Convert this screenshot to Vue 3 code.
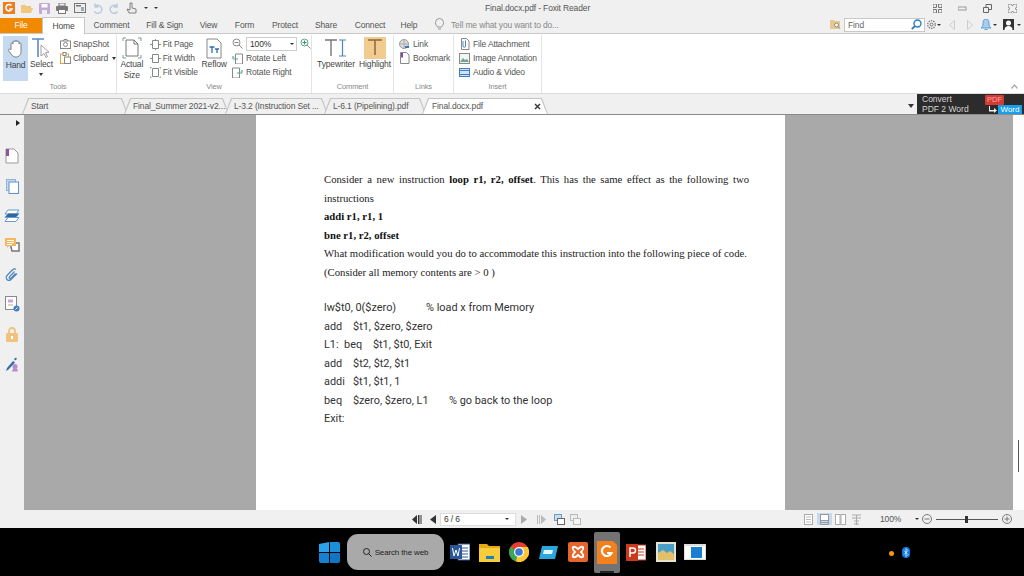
<script setup>
const menuTabs = [
  { label: 'Comment', w: 53 },
  { label: 'Fill & Sign', w: 53 },
  { label: 'View', w: 35 },
  { label: 'Form', w: 37 },
  { label: 'Protect', w: 44 },
  { label: 'Share', w: 38 },
  { label: 'Connect', w: 50 },
  { label: 'Help', w: 28 }
]
const docTabs = [
  { label: 'Final_Summer 2021-v2...', w: 105 },
  { label: 'L-3.2  (Instruction Set ...', w: 103 },
  { label: 'L-6.1 (Pipelining).pdf', w: 102 }
]
const codeLines = [
  'add    $t1, $zero, $zero',
  'L1:  beq    $t1, $t0, Exit',
  'add    $t2, $t2, $t1',
  'addi   $t1, $t1, 1'
]
const beqLine = 'beq    $zero, $zero, L1'
</script>

<template>
  <div class="app">
    <!-- title bar -->
    <div class="titlebar">
      <div class="quick">
        <svg width="12" height="12" viewBox="0 0 12 12"><rect width="12" height="12" fill="#ee7d1f"/><path d="M8.500 3.500A3.200 3.200 0 1 0 9 7H6.200" fill="none" stroke="#fff" stroke-width="1.600"/></svg>
        <svg width="12" height="11" viewBox="0 0 12 11"><path d="M0 2h4l1 1h5v2H3L1 10H0zM3 5h9l-2 5H1z" fill="#f0c77e"/></svg>
        <svg width="11" height="11" viewBox="0 0 11 11"><rect width="11" height="11" rx="1" fill="#c4a9d6"/><rect x="2.500" y="1" width="6" height="3.500" fill="#fff"/><rect x="3" y="7" width="5" height="4" fill="#eee"/></svg>
        <svg width="12" height="11" viewBox="0 0 12 11"><rect x="3" width="6" height="3" fill="none" stroke="#777"/><rect y="3" width="12" height="5" rx="1" fill="#777"/><rect x="2.500" y="6.500" width="7" height="4" fill="#fff" stroke="#777"/></svg>
        <svg width="12" height="10" viewBox="0 0 12 10"><rect x=".5" y=".5" width="11" height="9" fill="#eee" stroke="#777"/><rect x="2" y="2" width="5" height="1.500" fill="#777"/><rect x="7" y="4" width="3" height="4" fill="#9ab"/></svg>
        <svg width="11" height="11" viewBox="0 0 11 11"><path d="M3 3.500a4 4 0 1 1-.5 5M3 .5v3.500h3.500" fill="none" stroke="#b9cbe0" stroke-width="1.500"/></svg>
        <svg width="11" height="11" viewBox="0 0 11 11"><path d="M8 3.500a4 4 0 1 0 .5 5M8 .5v3.500H4.500" fill="none" stroke="#b9cbe0" stroke-width="1.500"/></svg>
        <svg width="12" height="13" viewBox="0 0 12 13"><path d="M4 1h2v5l4 1v4H3L1 7l3 1z" fill="#eee" stroke="#666" stroke-width=".8"/></svg>
        <span class="caret small"></span>
        <span class="caret small"></span>
      </div>
      <div class="title">Final.docx.pdf - Foxit Reader</div>
      <div class="winctl">
        <svg width="9" height="9" viewBox="0 0 9 9"><path d="M0 0h3.500v3.500H0zM5.500 0H9v3.500H5.500zM0 5.500h3.500V9H0zM5.500 5.500H9V9H5.500z" fill="none" stroke="#777"/></svg>
        <svg width="9" height="9" viewBox="0 0 9 9"><rect y="3" width="8" height="3" fill="none" stroke="#999"/></svg>
        <svg width="9" height="9" viewBox="0 0 9 9"><path d="M.5 3.500h5v5h-5zM3 3V.5h5.500v5H6" fill="none" stroke="#666"/></svg>
        <svg width="9" height="9" viewBox="0 0 9 9"><path d="M0 0h3l1.500 2L6 0h3v3L7 4.500 9 6v3H6L4.500 7 3 9H0V6l2-1.500L0 3z" fill="none" stroke="#777" stroke-width=".8"/></svg>
      </div>
    </div>

    <!-- menu row -->
    <div class="menurow">
      <div class="file">File</div>
      <div class="home">Home</div>
      <div v-for="t in menuTabs" :key="t.label" class="menutab" :style="{ width: t.w + 'px' }">{{ t.label }}</div>
      <svg class="bulb" width="9" height="13" viewBox="0 0 9 13"><path d="M2.500 9C1.500 7.500.5 7 .5 4.500a4 4 0 0 1 8 0C8.500 7 7.500 7.500 6.500 9zM3 11h3" fill="none" stroke="#999"/></svg>
      <div class="tellme">Tell me what you want to do...</div>
      <div class="grow"></div>
      <svg class="findfolder" width="11" height="11" viewBox="0 0 11 11"><path d="M0 1h4l1 1h5v8H0z" fill="#e8c88e"/><circle cx="6.500" cy="6" r="2" fill="#fff" stroke="#888"/><path d="M8 7.500l2 2" stroke="#888"/></svg>
      <div class="find">
        <span>Find</span>
        <svg width="11" height="11" viewBox="0 0 11 11"><circle cx="6.500" cy="4.500" r="3.500" fill="none" stroke="#2e7dc2" stroke-width="1.400"/><path d="M4 7L.8 10.200" stroke="#2e7dc2" stroke-width="1.800"/></svg>
      </div>
      <svg class="gear" width="11" height="11" viewBox="0 0 11 11"><circle cx="5.500" cy="5.500" r="3.800" fill="none" stroke="#777" stroke-width="1.200" stroke-dasharray="1.500 .9"/><circle cx="5.500" cy="5.500" r="1.500" fill="none" stroke="#777"/></svg>
      <span class="caret small"></span>
      <svg class="navarrow" width="6" height="10" viewBox="0 0 6 10"><path d="M5.500.5L.5 5l5 4.500z" fill="none" stroke="#ccc"/></svg>
      <svg class="navarrow2" width="6" height="10" viewBox="0 0 6 10"><path d="M.5.500L5.500 5 .5 9.500z" fill="none" stroke="#ccc"/></svg>
      <svg class="bell" width="10" height="12" viewBox="0 0 10 12"><path d="M5 0c3 0 3 3 3 5s1 3 2 4H0c1-1 2-2 2-4s0-5 3-5zM3.500 10.500h3" fill="#a9cdee" stroke="#3f8ed0" stroke-width=".8"/></svg>
      <span class="caret small"></span>
      <svg class="user" width="11" height="11" viewBox="0 0 11 11"><rect width="11" height="11" fill="#333"/><circle cx="5.500" cy="4" r="2.500" fill="#fff"/><path d="M1.500 11c0-3 2-4 4-4s4 1 4 4z" fill="#fff"/></svg>
      <span class="caret small"></span>
    </div>

    <!-- ribbon -->
    <div class="ribbon">
      <div class="group g-tools">
        <div class="groupbody">
          <div class="bigbtn hand">
            <svg width="18" height="20" viewBox="0 0 18 20"><path d="M4 11V5a1 1 0 0 1 2 0V3a1 1 0 0 1 2 0v-.5a1 1 0 0 1 2 0V3a1 1 0 0 1 2 0v2a1 1 0 0 1 2 0v7c0 4-2 6-5 6-2.500 0-3.500-1-5-3l-2.500-3.500c-.5-1 .8-2 2-1z" fill="#fff" stroke="#777" stroke-width=".9"/></svg>
            <span class="handlabel">Hand</span>
          </div>
          <div class="bigbtn select">
            <svg width="20" height="22" viewBox="0 0 20 22"><path d="M1 2h12M7 2v18" stroke="#5b8cc0" stroke-width="1.600" fill="none"/><path d="M10 8v11l3-2.500 2 4 1.500-.8-2-4 3.500-.5z" fill="#fff" stroke="#888" stroke-width=".8"/></svg>
            <span class="biglabel">Select</span>
            <span class="caret"></span>
          </div>
          <div class="rows r-snap">
            <div class="row">
              <svg width="11" height="10" viewBox="0 0 11 10"><rect x=".5" y="2" width="10" height="7.500" fill="none" stroke="#888"/><circle cx="5.500" cy="5.500" r="2" fill="none" stroke="#888"/><path d="M3 2l1-1.500h3L8 2" fill="none" stroke="#888"/></svg>
              <span>SnapShot</span>
            </div>
            <div class="row">
              <svg width="11" height="12" viewBox="0 0 11 12"><rect x=".5" y="2" width="8" height="9.500" fill="#fff" stroke="#e8a33d"/><rect x="3" y=".5" width="3" height="3" fill="#fff" stroke="#888"/><rect x="4.500" y="5" width="6" height="6.500" fill="#fff" stroke="#888"/></svg>
              <span>Clipboard</span>
              <span class="caret ml"></span>
            </div>
          </div>
        </div>
        <div class="grouplabel">Tools</div>
      </div>

      <div class="group g-view">
        <div class="groupbody">
          <div class="bigbtn actual">
            <svg width="20" height="22" viewBox="0 0 20 22"><path d="M4 3h8l4 4v12H4z" fill="#fff" stroke="#777"/><path d="M12 3v4h4" fill="none" stroke="#777"/><path d="M1 4V1h3M16 1h3v3M1 18v3h3M16 21h3v-3" fill="none" stroke="#6aa88f"/></svg>
            <span class="biglabel">Actual<br>Size</span>
          </div>
          <div class="rows r-fit">
            <div class="row">
              <svg width="11" height="11" viewBox="0 0 11 11"><path d="M2.500 1.500h6v8h-6z" fill="#fff" stroke="#888"/><path d="M5.500 0v2M5.500 9v2M0 5.500h2M9 5.500h2" stroke="#5ba58a"/></svg>
              <span>Fit Page</span>
            </div>
            <div class="row">
              <svg width="11" height="11" viewBox="0 0 11 11"><path d="M2.500 1.500h6v8h-6z" fill="#fff" stroke="#888"/><path d="M0 5.500h2M9 5.500h2" stroke="#5ba58a"/></svg>
              <span>Fit Width</span>
            </div>
            <div class="row">
              <svg width="11" height="11" viewBox="0 0 11 11"><path d="M2.500 1.500h6v8h-6z" fill="#fff" stroke="#888"/><path d="M0 2V0h2M9 0h2v2M0 9v2h2M9 11h2V9" fill="none" stroke="#5ba58a"/></svg>
              <span>Fit Visible</span>
            </div>
          </div>
          <div class="bigbtn reflow">
            <svg width="16" height="21" viewBox="0 0 16 21"><path d="M1 1h10l4 4v15H1z" fill="#fff" stroke="#888"/><path d="M3.500 9h5M6 9v6M9 11h4M11 11v4" stroke="#2f6fa8" stroke-width="1.300" fill="none"/></svg>
            <span class="biglabel">Reflow</span>
          </div>
          <div class="rows r-zoom">
            <div class="zoomrow">
              <svg width="11" height="11" viewBox="0 0 11 11"><circle cx="4.500" cy="4.500" r="3.500" fill="none" stroke="#888"/><path d="M2.500 4.500h4M7 7l3.500 3.500" stroke="#888"/></svg>
              <div class="zoombox"><span>100%</span><span class="caret small"></span></div>
              <svg width="11" height="11" viewBox="0 0 11 11"><circle cx="4.500" cy="4.500" r="3.500" fill="none" stroke="#5ba58a"/><path d="M2.500 4.500h4M4.500 2.500v4" stroke="#3b9273"/><path d="M7 7l3.500 3.500" stroke="#888"/></svg>
            </div>
            <div class="row">
              <svg width="11" height="11" viewBox="0 0 11 11"><path d="M3.500 1h7v10h-7z" fill="#fff" stroke="#888"/><path d="M6 6H1M1 6V3.500M1 3.500l-1 1M1 3.500l1 1" stroke="#5ba58a" fill="none"/></svg>
              <span>Rotate Left</span>
            </div>
            <div class="row">
              <svg width="11" height="11" viewBox="0 0 11 11"><path d="M.5 1h7v10h-7z" fill="#fff" stroke="#888"/><path d="M5 6h5M10 6V3.500M10 3.500l-1 1M10 3.500l1 1" stroke="#5ba58a" fill="none"/></svg>
              <span>Rotate Right</span>
            </div>
          </div>
        </div>
        <div class="grouplabel">View</div>
      </div>

      <div class="group g-comment">
        <div class="groupbody">
          <div class="bigbtn typewriter">
            <svg width="24" height="22" viewBox="0 0 24 22"><path d="M1 3h12M7 3v16" stroke="#777" stroke-width="1.400" fill="none"/><path d="M15 3h7M15 19h7M18.500 3v16" stroke="#4d86bf" stroke-width="1.200" fill="none"/></svg>
            <span class="biglabel">Typewriter</span>
          </div>
          <div class="bigbtn highlight">
            <div class="hl-icon">
              <svg width="22" height="21" viewBox="0 0 22 21"><path d="M4 3h14M11 3v15" stroke="#8a6a3a" stroke-width="1.500" fill="none"/></svg>
            </div>
            <span class="biglabel">Highlight</span>
          </div>
        </div>
        <div class="grouplabel">Comment</div>
      </div>

      <div class="group g-links">
        <div class="groupbody">
          <div class="rows r-links">
            <div class="row">
              <svg width="11" height="11" viewBox="0 0 11 11"><circle cx="5" cy="5" r="4.500" fill="#ddd" stroke="#999"/><path d="M.5 5h9M5 .5v9" stroke="#aaa"/><path d="M6 8h2M8 8h2" stroke="#3677b5" stroke-width="2"/></svg>
              <span>Link</span>
            </div>
            <div class="row">
              <svg width="11" height="12" viewBox="0 0 11 12"><path d="M1.500.5h6l2.500 2.500v8.500h-8.500z" fill="#fff" stroke="#888"/><path d="M2 1h2v5L3 5 2 6z" fill="#7a4ea0"/></svg>
              <span>Bookmark</span>
            </div>
          </div>
        </div>
        <div class="grouplabel">Links</div>
      </div>

      <div class="group g-insert">
        <div class="groupbody">
          <div class="rows r-insert">
            <div class="row">
              <svg width="11" height="12" viewBox="0 0 11 12"><path d="M2.500.5h5l2.500 2.500v8.500H2.500z" fill="#fff" stroke="#888"/><path d="M4 3v5a1.200 1.200 0 0 0 2.500 0V2.500" fill="none" stroke="#4d86bf"/></svg>
              <span>File Attachment</span>
            </div>
            <div class="row">
              <svg width="11" height="11" viewBox="0 0 11 11"><rect x=".5" y=".5" width="10" height="10" fill="#f5f5f5" stroke="#888"/><path d="M1 9l3-4 2 2 2-1 2 3z" fill="#6aa88f"/></svg>
              <span>Image Annotation</span>
            </div>
            <div class="row">
              <svg width="11" height="9" viewBox="0 0 11 9"><rect x=".5" y=".5" width="10" height="8" fill="#cfe2f3" stroke="#3f7fbd"/><path d="M.5 2.500h10M.5 6.500h10" stroke="#3f7fbd"/></svg>
              <span>Audio &amp; Video</span>
            </div>
          </div>
        </div>
        <div class="grouplabel">Insert</div>
      </div>

      <div class="grow ribbon-end">
        <svg width="7" height="5" viewBox="0 0 7 5"><path d="M.5 4.500L3.500 1l3 3.500" fill="none" stroke="#aaa" stroke-width="1.300"/></svg>
      </div>
    </div>

    <!-- document tabs -->
    <div class="tabstrip">
      <div class="doctab start">Start</div>
      <div v-for="t in docTabs" :key="t.label" class="doctab" :style="{ width: t.w + 'px' }">{{ t.label }}</div>
      <div class="doctab active">
        <span>Final.docx.pdf</span>
        <svg width="7" height="7" viewBox="0 0 7 7"><path d="M1 1l5 5M6 1L1 6" stroke="#333" stroke-width="1.400"/></svg>
      </div>
      <div class="grow"></div>
      <span class="caret stripcaret"></span>
      <div class="convert">
        <div class="convertrow"><span>Convert</span><span class="pdfpill">PDF</span></div>
        <div class="convertrow">
          <span>PDF 2 Word</span>
          <span class="wordwrap">
            <svg width="8" height="7" viewBox="0 0 8 7"><path d="M1 0v4h4V2l3 2.500L5 7V5.500H0V0z" fill="#eee"/></svg>
            <span class="wordpill">Word</span>
          </span>
        </div>
      </div>
    </div>

    <!-- main -->
    <div class="main">
      <div class="sidebar">
        <span class="sidearrow"></span>
        <svg width="14" height="16" viewBox="0 0 14 16"><path d="M1 1h8l4 4v10H1z" fill="#fff" stroke="#999"/><rect x="1" y="1" width="3" height="7" fill="#8a56a8"/></svg>
        <svg width="13" height="15" viewBox="0 0 13 15"><rect x=".5" y=".5" width="9" height="11" fill="#c6d9ec" stroke="#8fb2d6"/><rect x="3" y="3" width="9.500" height="11.500" fill="#fff" stroke="#5b93c9"/></svg>
        <svg width="16" height="14" viewBox="0 0 16 14"><path d="M4 1h11l-3 4H1z" fill="#fff" stroke="#6a9bd0"/><path d="M4 4.500h11l-3 4H1z" fill="#33659c" stroke="#6a9bd0"/><path d="M4 8.500h11l-3 4H1z" fill="#fff" stroke="#6a9bd0"/></svg>
        <svg width="15" height="14" viewBox="0 0 15 14"><path d="M5 5h9v8H7z" fill="#fff" stroke="#777" stroke-width="1.500"/><path d="M0 0h11v8H4L2 10V8H0z" fill="#f4b65f"/><path d="M2 2.500h7M2 4.500h7M2 6.500h5" stroke="#fff"/></svg>
        <svg width="14" height="14" viewBox="0 0 14 14"><path d="M11 2.500a2.200 2.200 0 0 0-3.200 0L2 8.500a2.800 2.800 0 0 0 4 4l6-6M9.500 4.500L4.500 9.800a1 1 0 0 0 1.500 1.400l4.500-4.700" fill="none" stroke="#4d86bf" stroke-width="1.200"/></svg>
        <svg width="15" height="16" viewBox="0 0 15 16"><rect x=".5" y=".5" width="11" height="13" fill="#fff" stroke="#888"/><path d="M3 3.500h5v3H3z" fill="#c7a6dc"/><path d="M3 9h5" stroke="#aaa"/><circle cx="11.500" cy="12.500" r="3" fill="#3f7fbd"/><path d="M10.500 13.500l2-2" stroke="#fff"/></svg>
        <svg width="12" height="15" viewBox="0 0 12 15"><path d="M3 6V4a3 3 0 0 1 6 0v2" fill="none" stroke="#efc27f" stroke-width="1.800"/><rect y="6" width="12" height="9" rx="1" fill="#efc27f"/><rect x="5" y="9" width="2" height="3" fill="#fff"/></svg>
        <svg width="14" height="15" viewBox="0 0 14 15"><path d="M1 14l1-3 6-7 2 1.500-6.500 7z" fill="#2f6fa8"/><path d="M9 2l2-1.500 1 1.500-2 1.500z" fill="#2f6fa8"/><circle cx="10" cy="9.500" r="2.500" fill="#b58ccf"/><path d="M8 11.500l-1 3h6l-1-3z" fill="#b58ccf"/></svg>
        <div class="grip"></div>
      </div>
      <div class="docarea">
        <div class="page">
          <p class="just">Consider a new instruction <b>loop r1, r2, offset</b>. This has the same effect as the following two</p>
          <p>instructions</p>
          <p><b>addi r1, r1, 1</b></p>
          <p><b>bne r1, r2, offset</b></p>
          <p>What modification would you do to accommodate this instruction into the following piece of code.</p>
          <p>(Consider all memory contents are &gt; 0 )</p>
          <div class="code">
            <p class="withnote"><span class="c1">lw$t0, 0($zero)</span><span>% load x from Memory</span></p>
            <p v-for="l in codeLines" :key="l">{{ l }}</p>
            <p class="withnote"><span class="c2">{{ beqLine }}</span><span>% go back to the loop</span></p>
            <p>Exit:</p>
          </div>
        </div>
      </div>
      <div class="scrollbar"><div class="thumb"></div></div>
    </div>

    <!-- status bar -->
    <div class="status">
      <div class="pagenav">
        <svg width="11" height="9" viewBox="0 0 11 9"><path d="M5 0v9L0 4.500zM6 0h1.500v9H6zM8.500 0h1v9h-1z" fill="#333"/></svg>
        <svg class="prev" width="6" height="9" viewBox="0 0 6 9"><path d="M6 0v9L0 4.500z" fill="#333"/></svg>
        <div class="pagebox"><span>6 / 6</span><span class="caret small"></span></div>
        <svg width="6" height="9" viewBox="0 0 6 9"><path d="M0 0v9l6-4.500z" fill="#aaa"/></svg>
        <svg class="last" width="9" height="9" viewBox="0 0 9 9"><path d="M0 0h1v9H0zM2 0h1v9H2zM4 0v9l5-4.500z" fill="#bbb"/></svg>
        <svg width="11" height="11" viewBox="0 0 11 11"><rect x=".5" y=".5" width="7" height="6" fill="#cde" stroke="#6a9bd0"/><rect x="3.500" y="4.500" width="7" height="6" fill="#fff" stroke="#666"/></svg>
        <svg class="lastcopy" width="11" height="11" viewBox="0 0 11 11"><rect x=".5" y=".5" width="7" height="6" fill="#eee" stroke="#bbb"/><rect x="3.500" y="4.500" width="7" height="6" fill="#f5f5f5" stroke="#bbb"/></svg>
      </div>
      <div class="viewbtns">
        <div class="vbtn"><svg width="9" height="11" viewBox="0 0 9 11"><rect x=".5" y=".5" width="8" height="10" fill="#fff" stroke="#aaa"/><path d="M2 3h5M2 5.500h5M2 8h5" stroke="#bbb"/></svg></div>
        <div class="vbtn on"><svg width="9" height="11" viewBox="0 0 9 11"><rect x=".5" y=".5" width="8" height="6" fill="#fff" stroke="#999"/><path d="M.5 8.500h8M.5 10.500h8M.5 6.500v4M8.500 6.500v4" stroke="#999"/></svg></div>
        <div class="vbtn"><svg width="11" height="11" viewBox="0 0 11 11"><rect x=".5" y=".5" width="4.500" height="10" fill="#fff" stroke="#aaa"/><rect x="6" y=".5" width="4.500" height="10" fill="#fff" stroke="#aaa"/></svg></div>
        <div class="vbtn"><svg width="11" height="11" viewBox="0 0 11 11"><path d="M1 1h9M1 4h9M5.500 1v10M3 7h5M3 10h5" stroke="#aaa" fill="none"/></svg></div>
      </div>
      <div class="zoomval">100%</div>
      <span class="caret small"></span>
      <svg width="10" height="10" viewBox="0 0 10 10"><circle cx="5" cy="5" r="4.500" fill="none" stroke="#777"/><path d="M2.500 5h5" stroke="#777"/></svg>
      <div class="slider"><div class="knob"></div></div>
      <svg width="10" height="10" viewBox="0 0 10 10"><circle cx="5" cy="5" r="4.500" fill="none" stroke="#777"/><path d="M2.500 5h5M5 2.500v5" stroke="#777"/></svg>
    </div>

    <!-- taskbar -->
    <div class="taskbar">
      <svg class="winlogo" width="21" height="21" viewBox="0 0 21 21"><path d="M0 2l10-2v10H0z" fill="#2aa4e8"/><path d="M11 0h8a2 2 0 0 1 2 2v8H11z" fill="#1a90dd"/><path d="M0 11h10v10H2a2 2 0 0 1-2-2z" fill="#1482d0"/><path d="M11 11h10v8a2 2 0 0 1-2 2h-8z" fill="#0f76c4"/></svg>
      <div class="search">
        <svg width="9" height="9" viewBox="0 0 9 9"><circle cx="3.500" cy="3.500" r="3" fill="none" stroke="#222"/><path d="M5.800 5.800L8.500 8.500" stroke="#222"/></svg>
        <span>Search the web</span>
      </div>
      <div class="apps">
        <div class="app-slot">
          <svg width="20" height="18" viewBox="0 0 20 18"><rect x="8" y="1" width="12" height="16" fill="#fff" stroke="#2b5797"/><path d="M11 5h7M11 8h7M11 11h7M11 14h7" stroke="#2b5797"/><rect y="2" width="12" height="14" fill="#2b5797"/><path d="M2.500 5l1.500 8 2-6 2 6 1.500-8" stroke="#fff" fill="none"/></svg>
        </div>
        <div class="app-slot">
          <svg width="21" height="19" viewBox="0 0 21 19"><path d="M0 1h8l2 2h11v3H0z" fill="#e8a919"/><rect y="5" width="21" height="14" fill="#f8cd3a"/><rect x="7" y="13" width="8" height="3" fill="#1b7fc4"/></svg>
        </div>
        <div class="app-slot">
          <svg width="20" height="20" viewBox="0 0 20 20"><circle cx="10" cy="10" r="10" fill="#e5402f"/><path d="M10 10L1.400 5A10 10 0 0 0 7 19.500z" fill="#3aa757"/><path d="M10 5h8.700A10 10 0 0 1 7 19.500z" fill="#fcc934"/><circle cx="10" cy="10" r="5" fill="#fff"/><circle cx="10" cy="10" r="3.800" fill="#3b78d8"/></svg>
        </div>
        <div class="app-slot">
          <svg width="19" height="13" viewBox="0 0 19 13"><path d="M3 0h16l-3 13H0z" fill="#2aa7de"/><path d="M5 4h9l-1 4H4z" fill="#e6f5fb"/></svg>
        </div>
        <div class="app-slot">
          <svg width="20" height="20" viewBox="0 0 20 20"><rect width="20" height="20" rx="2" fill="#e4662c"/><path d="M5 5c2-1 3 0 5 2 2-2 3-3 5-2 1 2 0 3-2 5 2 2 3 3 2 5-2 1-3 0-5-2-2 2-3 3-5 2-1-2 0-3 2-5-2-2-3-3-2-5z" fill="none" stroke="#fff" stroke-width="1.800"/></svg>
        </div>
        <div class="app-slot active-slot">
          <svg width="20" height="23" viewBox="0 0 20 23"><path d="M0 0h16l4 4v19H0z" fill="#f2811d"/><path d="M13.500 6.500A5 5 0 1 0 14.500 12H10" fill="none" stroke="#fff" stroke-width="2.200"/></svg>
          <div class="activebar"></div>
        </div>
        <div class="app-slot">
          <svg width="20" height="19" viewBox="0 0 20 19"><rect x="8" y="2" width="12" height="15" fill="#fff" stroke="#c43e1c"/><path d="M12 6h6M12 9h6M12 12h6" stroke="#c43e1c"/><rect y="1" width="12" height="17" fill="#c8391d"/><path d="M4 14V5h3a2 2 0 0 1 0 5H4" fill="none" stroke="#fff" stroke-width="1.500"/></svg>
        </div>
        <div class="app-slot">
          <svg width="20" height="20" viewBox="0 0 20 20"><rect width="20" height="20" fill="#e8e2cc"/><rect x="2" y="2" width="16" height="16" fill="#4a9fc9"/><path d="M2 11l5-3 4 3 3-2 4 3v6H2z" fill="#e2bf6a"/></svg>
        </div>
        <div class="app-slot">
          <svg width="22" height="16" viewBox="0 0 22 16"><rect width="22" height="16" fill="#ddd"/><rect x="1" y="2" width="20" height="13" fill="#fff"/><rect x="7" y="3" width="11" height="11" fill="#1a7fd0"/></svg>
        </div>
      </div>
      <div class="grow"></div>
      <div class="tray">
        <span class="dot"></span>
        <svg width="8" height="11" viewBox="0 0 8 11"><rect width="8" height="11" rx="4" fill="#0a78e0"/><path d="M2 3.500l4 4-2 2v-8l2 2-4 4" fill="none" stroke="#fff" stroke-width=".7"/></svg>
      </div>
    </div>
  </div>
</template>

<style scoped>
.app {
  width: 1024px;
  height: 576px;
  display: flex;
  flex-direction: column;
  overflow: hidden;
  background: #f0f0f0;
  font-family: "Liberation Sans", Arial, sans-serif;
  font-size: 8.5px;
  letter-spacing: -.14px;
  color: #555;
}
.grow { flex: 1; }
.caret {
  display: inline-block;
  width: 0;
  height: 0;
  border-left: 2.5px solid transparent;
  border-right: 2.5px solid transparent;
  border-top: 3px solid #333;
}
.caret.small { border-left-width: 2px; border-right-width: 2px; border-top-width: 2px; }
.caret.ml { margin-left: 2px; }

.titlebar {
  height: 16px;
  display: flex;
  align-items: center;
  padding: 0 7px 0 3px;
}
.quick { width: 482px; display: flex; align-items: center; gap: 6px; }
.title { color: #555; width: 100px; white-space: nowrap; }
.winctl {
  margin-left: auto;
  display: flex;
  align-items: center;
  gap: 16px;
}

.menurow {
  height: 17px;
  display: flex;
  align-items: center;
  border-bottom: 1px solid #c8c8c8;
  padding-right: 3px;
  box-sizing: content-box;
}
.file {
  width: 42px;
  height: 15px;
  line-height: 15px;
  background: #f18a00;
  color: #fff;
  text-align: center;
  align-self: flex-end;
}
.home {
  width: 43px;
  height: 17px;
  line-height: 17px;
  background: #fff;
  text-align: center;
  color: #444;
  border: 1px solid #c8c8c8;
  border-bottom: none;
  box-sizing: border-box;
  align-self: flex-end;
  margin-bottom: -1px;
}
.menutab { text-align: center; white-space: nowrap; }
.bulb { margin-left: 12px; }
.tellme { margin-left: 7px; color: #888; }
.findfolder { margin-right: 3px; }
.find {
  width: 81px;
  height: 14px;
  background: #fff;
  border: 1px solid #c8c8c8;
  box-sizing: border-box;
  display: flex;
  align-items: center;
  justify-content: space-between;
  padding: 0 2px 0 3px;
  color: #666;
}
.gear { margin-left: 1px; }
.navarrow { margin-left: 8px; }
.navarrow2 { margin: 0 8px 0 12px; }
.bell { margin-right: 2px; }
.user { margin: 0 3px 0 6px; }

.ribbon {
  height: 60px;
  display: flex;
  background: #fff;
  border-bottom: 1px solid #dcdcdc;
  box-sizing: border-box;
}
.group {
  display: flex;
  flex-direction: column;
  border-right: 1px solid #e4e4e4;
  box-sizing: border-box;
  height: 58px;
  margin-top: 1px;
}
.groupbody { flex: 1; display: flex; min-height: 0; }
.grouplabel {
  height: 12px;
  line-height: 11px;
  text-align: center;
  color: #888;
  font-size: 7.5px;
}
.g-tools { width: 117px; }
.g-view { width: 195px; }
.g-comment { width: 82px; }
.g-links { width: 60px; }
.g-insert { width: 88px; }
.ribbon-end {
  display: flex;
  align-items: flex-end;
  justify-content: flex-end;
  padding: 0 6px 4px 0;
}
.bigbtn {
  display: flex;
  flex-direction: column;
  align-items: center;
  line-height: 11px;
  color: #444;
}
.biglabel { text-align: center; white-space: nowrap; }
.hand {
  width: 27px;
  height: 45px;
  margin: 1px 0 0 3px;
  background: #c5d9f1;
  padding-top: 3px;
  box-sizing: border-box;
}
.handlabel { margin-top: 1px; }
.select { width: 24px; margin: 2px 0 0 2px; }
.select .caret { margin-top: 3px; }
.r-snap { margin-left: 7px; }
.rows { display: flex; flex-direction: column; padding-top: 2px; }
.row {
  height: 14px;
  display: flex;
  align-items: center;
  gap: 2px;
  white-space: nowrap;
  color: #555;
}
.row svg { flex: none; }
.actual { width: 30px; margin: 2px 0 0 1px; }
.r-fit { margin-left: 4px; width: 55px; }
.reflow { width: 30px; margin: 3px 0 0 0; }
.r-zoom { margin-left: 4px; padding-top: 1px; }
.zoomrow { height: 15px; display: flex; align-items: center; gap: 3px; }
.zoombox {
  width: 51px;
  height: 14px;
  background: #fff;
  border: 1px solid #ccc;
  box-sizing: border-box;
  display: flex;
  align-items: center;
  justify-content: space-between;
  padding: 0 2px 0 3px;
  color: #333;
}
.r-zoom .row { height: 14px; gap: 3px; }
.typewriter { width: 44px; margin: 2px 0 0 2px; }
.highlight { width: 34px; margin: 2px 0 0 0; }
.typewriter svg { height: 22px; }
.hl-icon { width: 22px; height: 22px; background: #f1cb90; }
.g-links .groupbody { padding-left: 5px; }
.r-links .row { gap: 3px; }
.g-insert .groupbody { padding-left: 5px; }
.r-insert .row { gap: 3px; }

.tabstrip {
  height: 21px;
  display: flex;
  align-items: flex-end;
  padding-left: 22px;
  border-bottom: 1px solid #8a8a8a;
  box-sizing: border-box;
  background: #f0f0f0;
}
.doctab {
  position: relative;
  isolation: isolate;
  height: 16px;
  line-height: 17px;
  padding-left: 9px;
  margin-left: -4px;
  white-space: nowrap;
  box-sizing: border-box;
  flex: none;
  color: #555;
}
.doctab::before,
.doctab::after {
  content: "";
  position: absolute;
  z-index: -1;
  clip-path: polygon(0 100%, 6px 0, calc(100% - 6px) 0, 100% 100%);
}
.doctab::before { inset: 0; background: #c4c4c4; }
.doctab::after { inset: 1px 1px 0 1px; background: #f0f0f0; }
.start { width: 106px; margin-left: 0; }
.active {
  width: 126px;
  display: flex;
  align-items: center;
  justify-content: space-between;
  padding-right: 7px;
  padding-left: 10px;
}
.active::after { background: #fff; }
.stripcaret { margin: 0 3px 6px 0; border-left-width: 3px; border-right-width: 3px; border-top-width: 4px; }
.convert {
  width: 107px;
  height: 20px;
  background: #2c2c2c;
  color: #d5d5d5;
  padding: 1px 2px 0 5px;
  box-sizing: border-box;
  font-size: 8.5px;
  line-height: 9.5px;
  letter-spacing: 0;
}
.convertrow { display: flex; justify-content: space-between; }
.pdfpill {
  width: 19px;
  margin-right: 18px;
  background: #d63a32;
  color: #eaa;
  text-align: center;
  font-size: 7.5px;
  border-radius: 1px;
}
.wordwrap { display: flex; align-items: center; gap: 1px; }
.wordpill {
  width: 24px;
  background: #17a0ee;
  color: #fff;
  text-align: center;
  font-size: 8px;
}

.main { flex: 1; display: flex; min-height: 0; }
.sidebar {
  width: 24px;
  flex: none;
  position: relative;
  display: flex;
  flex-direction: column;
  align-items: center;
  gap: 15px;
  padding-top: 33px;
  box-sizing: border-box;
}
.sidebar svg { flex: none; }
.sidearrow {
  position: absolute;
  top: 5px;
  left: 16px;
  width: 0;
  height: 0;
  border-top: 3px solid transparent;
  border-bottom: 3px solid transparent;
  border-left: 4px solid #222;
}
.grip {
  position: absolute;
  top: 142px;
  right: -1px;
  height: 24px;
  width: 1px;
  border-right: 1px dotted #aaa;
}
.docarea {
  flex: 1;
  background: #a9a9a9;
  display: flex;
  justify-content: flex-start;
  padding-left: 232px;
  min-width: 0;
}
.page {
  width: 529px;
  height: 100%;
  background: #fff;
  box-sizing: border-box;
  padding: 55px 36px 0 68px;
  font-family: "Liberation Serif", "Times New Roman", serif;
  font-size: 10.7px;
  letter-spacing: 0;
  line-height: 18.5px;
  color: #222;
}
.page p { margin: 0; white-space: pre; }
.page p.just { white-space: normal; text-align: justify; text-align-last: justify; }
.page b { color: #111; }
.code {
  margin-top: 18px;
  font-family: Roboto, "Liberation Sans", sans-serif;
  font-size: 10.9px;
  color: #333;
}
.withnote { display: flex; }
.c1 { width: 102px; }
.c2 { width: 125px; }
.scrollbar {
  width: 11px;
  flex: none;
  background: #fdfdfd;
  position: relative;
}
.thumb {
  position: absolute;
  top: 325px;
  left: 5px;
  width: 1px;
  height: 32px;
  background: #555;
}

.status {
  height: 18px;
  flex: none;
  display: flex;
  align-items: center;
  background: #f0f0f0;
  padding-left: 412px;
}
.pagenav { display: flex; align-items: center; width: 396px; flex: none; }
.prev { margin-left: 7px; }
.pagebox {
  width: 76px;
  height: 13px;
  margin: 0 5px 0 4px;
  background: #fff;
  border: 1px solid #ddd;
  box-sizing: border-box;
  display: flex;
  align-items: center;
  justify-content: space-between;
  padding: 0 3px;
  color: #333;
}
.last { margin: 0 8px 0 10px; }
.lastcopy { margin-left: 5px; }
.viewbtns { display: flex; gap: 1px; margin-left: -7px; }
.vbtn {
  width: 15px;
  height: 12px;
  display: flex;
  align-items: center;
  justify-content: center;
}
.vbtn.on { background: #c5d9f1; }
.zoomval { margin: 0 14px 0 16px; color: #555; width: 21px; }
.status .caret.small { margin-right: 3px; }
.slider {
  width: 62px;
  height: 1px;
  background: #555;
  margin: 0 4px;
  position: relative;
}
.knob {
  position: absolute;
  left: 29px;
  top: -3px;
  width: 3px;
  height: 7px;
  background: #333;
}

.taskbar {
  height: 48px;
  flex: none;
  background: #000;
  display: flex;
  align-items: center;
  padding-left: 319px;
}
.winlogo { flex: none; }
.search {
  width: 97px;
  height: 36px;
  margin-left: 7px;
  background: #a9a9a9;
  border-radius: 11px;
  display: flex;
  align-items: center;
  justify-content: center;
  gap: 3px;
  color: #222;
  font-size: 8px;
}
.apps { display: flex; margin-left: 1px; align-items: center; }
.app-slot {
  width: 29.500px;
  height: 41px;
  display: flex;
  align-items: center;
  justify-content: center;
  position: relative;
}
.active-slot { background: #737373; width: 26px; margin: 0 2px 0 1px; border-radius: 2px; }
.activebar {
  position: absolute;
  bottom: 0;
  left: 6px;
  width: 14px;
  height: 2px;
  background: #222;
}
.tray {
  display: flex;
  align-items: center;
  gap: 8px;
  margin-right: 114px;
}
.dot {
  width: 5px;
  height: 5px;
  border-radius: 50%;
  background: #f59a00;
  margin-top: 3px;
}
</style>

<style>
html, body { margin: 0; background: #f0f0f0; }
</style>
